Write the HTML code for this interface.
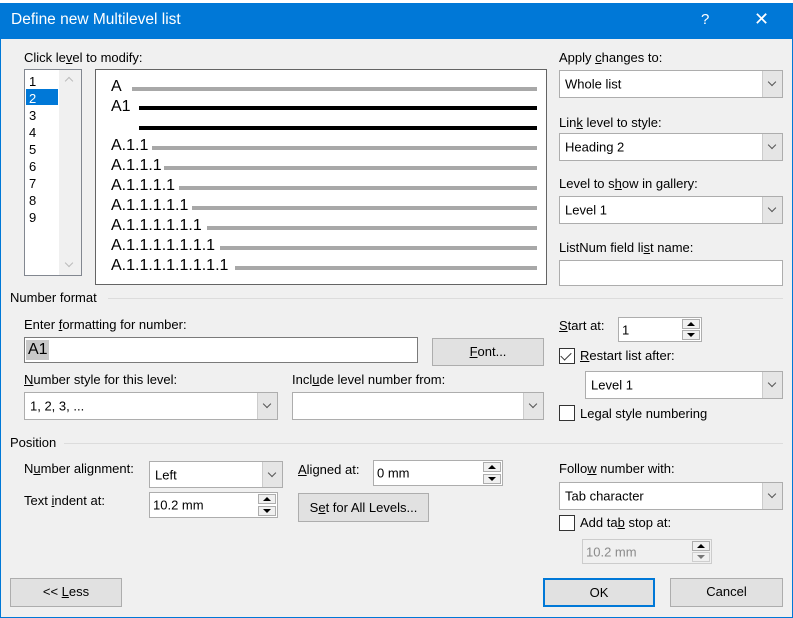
<!DOCTYPE html>
<html><head><meta charset="utf-8"><style>
*{box-sizing:border-box;margin:0;padding:0}
body{width:793px;height:618px;overflow:hidden;background:#f0f0f0;font:13px "Liberation Sans",sans-serif;color:#000;position:relative}
.a{position:absolute}
.t{position:absolute;line-height:14px;white-space:nowrap}
.box{position:absolute;background:#fff;border:1px solid #7a7a7a}
.cb{position:absolute;background:#fff;border:1px solid #adadad}
.cb span{position:absolute;left:5px;top:50%;transform:translateY(-50%)}
.cb i{position:absolute;right:0;top:0;bottom:0;width:20px;background:#e5e5e5;border-left:1px solid #ccc}
.cb i:after{content:"";position:absolute;left:6px;top:8px;width:5px;height:5px;border-right:1px solid #555;border-bottom:1px solid #555;transform:rotate(45deg)}
.sp{position:absolute;background:#fff;border:1px solid #adadad}
.sp span{position:absolute;left:3px;top:50%;transform:translateY(-50%)}
.sp b{position:absolute;right:1px;width:18px;height:10px;background:#f0f0f0;border:1px solid #adadad}
.sp b:after{content:"";position:absolute;left:4px;border-left:4px solid transparent;border-right:4px solid transparent}
.sp b.u{top:1px}.sp b.u:after{top:2px;border-bottom:4px solid #000}
.sp b.d{bottom:1px}.sp b.d:after{top:2px;border-top:4px solid #000}
.btn{position:absolute;background:#e1e1e1;border:1px solid #adadad;text-align:center;line-height:26px}
.chk{position:absolute;width:16px;height:16px;background:#fff;border:1px solid #333}
.sep{position:absolute;height:1px;background:#dcdcdc}
.g{position:absolute;height:4px;background:#a8a8a8;right:9px}
.k{position:absolute;height:4px;background:#000;right:9px}
.p{position:absolute;font-size:16px;left:15px}
u{text-decoration:underline}
</style></head><body>
<div class="a" style="left:0;top:0;width:793px;height:3px;background:#fff"></div>
<div class="a" style="left:0;top:3px;width:793px;height:36px;background:#0078d7"></div>
<div class="t" style="left:11px;top:12px;color:#fff;font-size:15.5px;line-height:16px">Define new Multilevel list</div>
<div class="t" style="left:701px;top:12px;color:#fff;font-size:15px;line-height:16px">?</div>
<div class="t" style="left:754px;top:10px;color:#fff;font-size:18px;line-height:18px">✕</div>
<div class="a" style="left:0;top:39px;width:1px;height:579px;background:#0078d7"></div>
<div class="a" style="right:0;top:39px;width:1px;height:579px;background:#0078d7"></div>
<div class="a" style="left:0;bottom:0;width:793px;height:1px;background:#0078d7"></div>

<div class="t" style="left:24px;top:51px">Click le<u>v</u>el to modify:</div>
<div class="box" style="left:24px;top:69px;width:58px;height:207px;border-color:#828790"></div>
<div class="a" style="left:59px;top:70px;width:22px;height:205px;background:#f0f0f0"></div>
<div class="a" style="left:66px;top:78px;width:6px;height:6px;border-left:1px solid #bbb;border-top:1px solid #bbb;transform:rotate(45deg)"></div>
<div class="a" style="left:66px;top:260px;width:6px;height:6px;border-right:1px solid #bbb;border-bottom:1px solid #bbb;transform:rotate(45deg)"></div>
<div class="a" style="left:26px;top:89px;width:32px;height:16px;background:#0078d7"></div>
<div class="t" style="left:29px;top:73px;line-height:17px">1<br><span style="color:#fff">2</span><br>3<br>4<br>5<br>6<br>7<br>8<br>9</div>

<div class="box" style="left:95px;top:69px;width:452px;height:216px;border-color:#646464">
<div class="p" style="top:8px">A</div><div class="g" style="left:36px;top:17px"></div>
<div class="p" style="top:28px">A1</div><div class="k" style="left:43px;top:36px"></div>
<div class="k" style="left:43px;top:56px"></div>
<div class="p" style="top:67px">A.1.1</div><div class="g" style="left:56px;top:76px"></div>
<div class="p" style="top:87px">A.1.1.1</div><div class="g" style="left:68px;top:96px"></div>
<div class="p" style="top:107px">A.1.1.1.1</div><div class="g" style="left:83px;top:116px"></div>
<div class="p" style="top:127px">A.1.1.1.1.1</div><div class="g" style="left:96px;top:136px"></div>
<div class="p" style="top:147px">A.1.1.1.1.1.1</div><div class="g" style="left:111px;top:156px"></div>
<div class="p" style="top:167px">A.1.1.1.1.1.1.1</div><div class="g" style="left:124px;top:176px"></div>
<div class="p" style="top:187px">A.1.1.1.1.1.1.1.1</div><div class="g" style="left:139px;top:196px"></div>
</div>

<div class="t" style="left:559px;top:51px">Apply <u>c</u>hanges to:</div>
<div class="cb" style="left:559px;top:70px;width:224px;height:28px"><span>Whole list</span><i></i></div>
<div class="t" style="left:559px;top:116px">Lin<u>k</u> level to style:</div>
<div class="cb" style="left:559px;top:133px;width:224px;height:28px"><span>Heading 2</span><i></i></div>
<div class="t" style="left:559px;top:177px">Level to s<u>h</u>ow in gallery:</div>
<div class="cb" style="left:559px;top:196px;width:224px;height:28px"><span>Level 1</span><i></i></div>
<div class="t" style="left:559px;top:241px">ListNum field li<u>s</u>t name:</div>
<div class="box" style="left:559px;top:260px;width:224px;height:26px;border-color:#adadad"></div>

<div class="t" style="left:10px;top:291px">Number format</div>
<div class="sep" style="left:108px;top:298px;width:675px"></div>
<div class="t" style="left:24px;top:318px">Enter <u>f</u>ormatting for number:</div>
<div class="box" style="left:24px;top:337px;width:394px;height:26px"><span class="a" style="left:1px;top:2px;height:20px;width:23px;background:#c8c8c8;font-size:16px;line-height:20px;padding-left:2px">A1</span></div>
<div class="btn" style="left:432px;top:338px;width:112px;height:28px"><u>F</u>ont...</div>
<div class="t" style="left:24px;top:373px"><u>N</u>umber style for this level:</div>
<div class="cb" style="left:24px;top:392px;width:254px;height:28px"><span>1, 2, 3, ...</span><i></i></div>
<div class="t" style="left:292px;top:373px">Incl<u>u</u>de level number from:</div>
<div class="cb" style="left:292px;top:392px;width:252px;height:28px"><span></span><i></i></div>

<div class="t" style="left:559px;top:319px"><u>S</u>tart at:</div>
<div class="sp" style="left:618px;top:317px;width:84px;height:25px"><span>1</span><b class="u"></b><b class="d"></b></div>
<div class="chk" style="left:559px;top:348px"></div>
<div class="a" style="left:563px;top:350px;width:6px;height:10px;border-right:1.5px solid #333;border-bottom:1.5px solid #333;transform:rotate(45deg)"></div>
<div class="t" style="left:580px;top:349px"><u>R</u>estart list after:</div>
<div class="cb" style="left:585px;top:371px;width:198px;height:28px"><span>Level 1</span><i></i></div>
<div class="chk" style="left:559px;top:405px"></div>
<div class="t" style="left:580px;top:407px">Le<u>g</u>al style numbering</div>

<div class="t" style="left:10px;top:436px">Position</div>
<div class="sep" style="left:64px;top:443px;width:719px"></div>
<div class="t" style="left:24px;top:462px">N<u>u</u>mber alignment:</div>
<div class="cb" style="left:149px;top:461px;width:134px;height:27px"><span>Left</span><i></i></div>
<div class="t" style="left:298px;top:463px"><u>A</u>ligned at:</div>
<div class="sp" style="left:373px;top:460px;width:130px;height:26px"><span>0 mm</span><b class="u"></b><b class="d"></b></div>
<div class="t" style="left:24px;top:494px">Text <u>i</u>ndent at:</div>
<div class="sp" style="left:149px;top:492px;width:129px;height:26px"><span>10.2 mm</span><b class="u"></b><b class="d"></b></div>
<div class="btn" style="left:298px;top:493px;width:131px;height:29px;line-height:27px">S<u>e</u>t for All Levels...</div>
<div class="t" style="left:559px;top:462px">Follo<u>w</u> number with:</div>
<div class="cb" style="left:559px;top:482px;width:224px;height:28px"><span>Tab character</span><i></i></div>
<div class="chk" style="left:559px;top:515px"></div>
<div class="t" style="left:580px;top:516px">Add ta<u>b</u> stop at:</div>
<div class="sp" style="left:582px;top:539px;width:130px;height:25px;background:#f0f0f0;border-color:#ccc;color:#8a8a8a"><span>10.2 mm</span><b class="u"></b><b class="d" style="opacity:.5"></b></div>

<div class="btn" style="left:10px;top:578px;width:112px;height:29px">&lt;&lt; <u>L</u>ess</div>
<div class="btn" style="left:543px;top:578px;width:112px;height:29px;border:2px solid #0078d7;line-height:25px">OK</div>
<div class="btn" style="left:670px;top:578px;width:113px;height:29px">Cancel</div>
</body></html>
